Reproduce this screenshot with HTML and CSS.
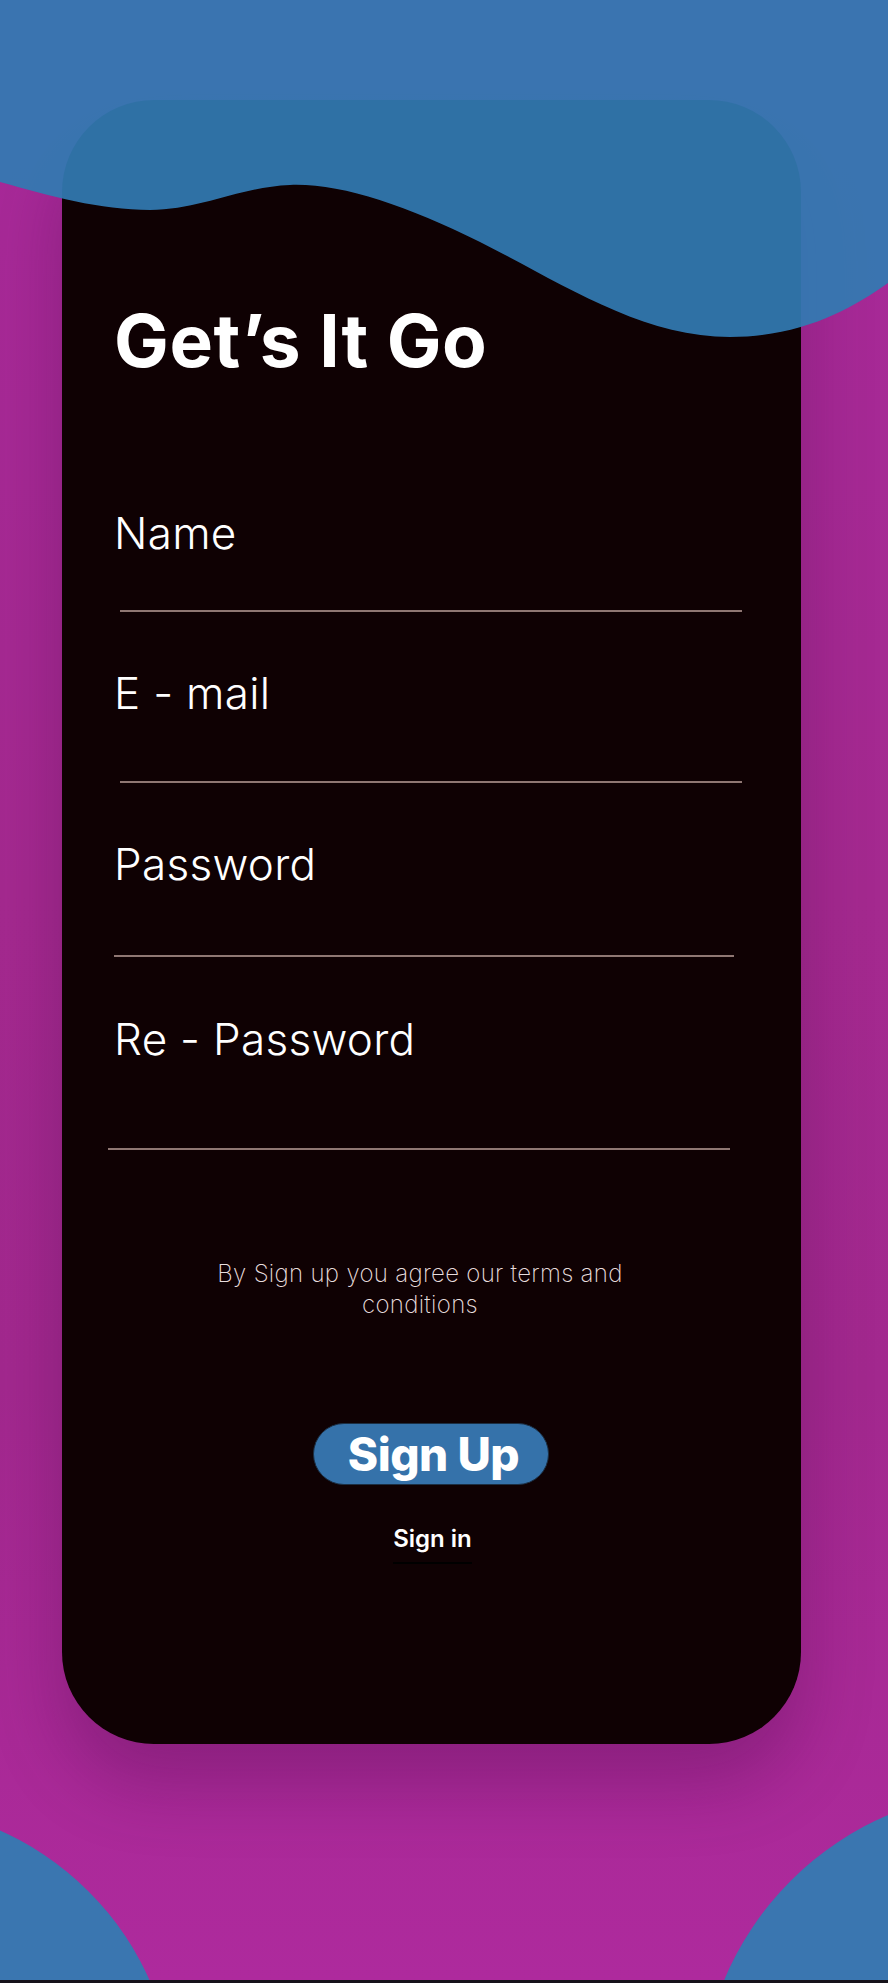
FILE: index.html
```html
<!DOCTYPE html>
<html lang="en">
<head>
<meta charset="utf-8">
<title>Get’s It Go – Sign Up</title>
<link rel="stylesheet" href="styles.css">
</head>
<body>
<div class="page">
  <div class="blob blob-left"></div>
  <div class="blob blob-right"></div>

  <main class="card">
    <h1 class="title">Get’s It Go</h1>

    <div class="field field-name">
      <label class="label">Name</label>
      <div class="rule rule-a"></div>
    </div>
    <div class="field field-mail">
      <label class="label">E - mail</label>
      <div class="rule rule-b"></div>
    </div>
    <div class="field field-pass">
      <label class="label">Password</label>
      <div class="rule rule-c"></div>
    </div>
    <div class="field field-repass">
      <label class="label">Re - Password</label>
      <div class="rule rule-d"></div>
    </div>

    <p class="terms">By Sign up you agree our terms and conditions</p>

    <div class="actions">
      <button class="btn-signup" type="button">Sign Up</button>
      <a class="link-signin" href="#">Sign in</a>
    </div>
  </main>

  <svg class="wave" viewBox="0 0 888 345" width="888" height="345" aria-hidden="true">
    <path d="M0 0 H888 V283 C850 310 800 337 730 337 C640 337 560 282 480 242 C405 205 340 183 290 185 C240 187 200 210 150 210 C100 210 50 196 0 182 Z" fill="#327ab2"/>
  </svg>
</div>
</body>
</html>
```

FILE: styles.css
```css
* { box-sizing: border-box; }

html, body {
  margin: 0;
  padding: 0;
}

body {
  background: #15121a;
  font-family: Inter, "Noto Sans", "Liberation Sans", sans-serif;
  color: #ffffff;
}

.page {
  position: relative;
  width: 888px;
  height: 1980px;
  overflow: hidden;
  padding: 100px 0 0 62px;
  background: linear-gradient(180deg, #a8299a 0%, #a4298f 45%, #a2288e 70%, #ae2a9d 100%);
}

.blob {
  position: absolute;
  border-radius: 50%;
  background: #3a76b0;
  z-index: 0;
}

.blob-left {
  left: -415px;
  top: 1805px;
  width: 590px;
  height: 590px;
}

.blob-right {
  left: 700px;
  top: 1790px;
  width: 620px;
  height: 620px;
}

.wave {
  position: absolute;
  top: 0;
  left: 0;
  z-index: 2;
  opacity: 0.93;
  pointer-events: none;
}

.card {
  position: relative;
  z-index: 1;
  width: 739px;
  height: 1644px;
  border-radius: 92px;
  background: #0f0103;
  padding: 205px 52px 0 52px;
  display: flex;
  flex-direction: column;
  box-shadow: 0 40px 70px rgba(70, 10, 70, 0.3);
}

.title {
  margin: 0;
  font-size: 73px;
  line-height: 72px;
  font-weight: 700;
  letter-spacing: 0.6px;
  color: #ffffff;
}

.field {
  display: flex;
  flex-direction: column;
}

.field-name { margin-top: 134px; }
.field-mail { margin-top: 59px; }
.field-pass { margin-top: 59px; }
.field-repass { margin-top: 60px; }

.label {
  display: block;
  font-size: 44px;
  line-height: 44px;
  font-weight: 300;
  letter-spacing: 0.3px;
  color: #ffffff;
}

.rule {
  height: 2px;
  background: #8f7773;
}

.field-name .rule { margin-top: 55px; }
.field-mail .rule { margin-top: 66px; }
.field-pass .rule { margin-top: 69px; }
.field-repass .rule { margin-top: 87px; }

.rule-a { margin-left: 6px; width: 622px; }
.rule-b { margin-left: 6px; width: 622px; }
.rule-c { margin-left: 0; width: 620px; }
.rule-d { margin-left: -6px; width: 622px; }

.terms {
  margin: 108px 0 0 84px;
  width: 444px;
  text-align: center;
  font-size: 24px;
  line-height: 31px;
  font-weight: 200;
  letter-spacing: 0.3px;
  color: #e8dede;
}

.actions {
  display: flex;
  flex-direction: column;
  align-items: center;
  margin-top: 103px;
  margin-left: -2px;
}

.btn-signup {
  width: 236px;
  height: 62px;
  border: 1px solid #1b2f44;
  border-radius: 31px;
  background: #3572aa;
  color: #ffffff;
  font-family: Inter, "Noto Sans", "Liberation Sans", sans-serif;
  font-size: 46px;
  line-height: 60px;
  font-weight: 800;
  letter-spacing: -0.5px;
  padding: 0 0 0 6px;
  cursor: pointer;
}

.link-signin {
  margin-top: 42px;
  margin-left: 4px;
  padding-bottom: 11px;
  font-size: 24px;
  line-height: 24px;
  font-weight: 600;
  color: #ffffff;
  text-decoration: none;
  border-bottom: 2px solid #000000;
}
```
